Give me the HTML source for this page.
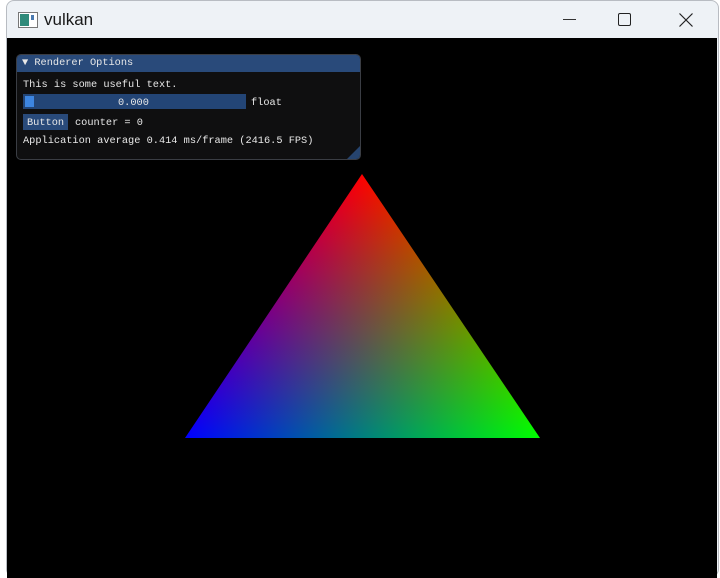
<!DOCTYPE html>
<html><head><meta charset="utf-8"><style>
html,body{margin:0;padding:0;width:720px;height:571px;overflow:hidden;background:#fff;font-family:"Liberation Sans",sans-serif}
.win{position:absolute;left:6px;top:0;width:711px;height:575px;border:1px solid #b8bcc2;border-radius:8px;background:#eef2f6;overflow:hidden}
.title{position:absolute;left:37px;top:9px;font-size:17px;color:#1a1a1a}
.content{position:absolute;left:0;top:38px;width:711px;height:540px;background:#000}
.mono{font-family:"Liberation Mono",monospace;font-size:10.3px;color:#e8e8e8;position:absolute;white-space:pre}
.panel{position:absolute;left:16px;top:54px;width:343px;height:104px;background:#0f0f10;border:1px solid #3a3d44;border-radius:5px;overflow:hidden}
.ph{position:absolute;left:0;top:0;width:100%;height:17px;background:#294a7a}
</style></head><body>
<div class="win">
 <svg style="position:absolute;left:11px;top:11px" width="20" height="16"><rect x="0.5" y="0.5" width="19" height="15" fill="#fff" stroke="#777"/><rect x="2" y="2" width="9" height="12" fill="#2f8a7a"/><rect x="13" y="3" width="3" height="5" fill="#4a7ab0"/></svg>
 <div class="title">vulkan</div>
 <div style="position:absolute;left:556px;top:18px;width:13px;height:1px;background:#333"></div>
 <div style="position:absolute;left:611px;top:12px;width:11px;height:11px;border:1.2px solid #222;border-radius:2px"></div>
 <svg style="position:absolute;left:672px;top:12px" width="14" height="14"><path d="M0.5 0.5L13.5 13.5M13.5 0.5L0.5 13.5" stroke="#222" stroke-width="1.2"/></svg>
</div>
<div class="content" style="left:7px;width:710px"></div>
<svg style="position:absolute;left:0;top:0" width="720" height="571">
<defs>
<linearGradient id="r" gradientUnits="userSpaceOnUse" x1="362" y1="438" x2="362" y2="174"><stop offset="0" stop-color="#000"/><stop offset="1" stop-color="#f00"/></linearGradient>
<linearGradient id="g" gradientUnits="userSpaceOnUse" x1="295.1" y1="273.8" x2="540" y2="438"><stop offset="0" stop-color="#000"/><stop offset="1" stop-color="#0f0"/></linearGradient>
<linearGradient id="b" gradientUnits="userSpaceOnUse" x1="429.1" y1="273.5" x2="185" y2="438"><stop offset="0" stop-color="#000"/><stop offset="1" stop-color="#00f"/></linearGradient>
</defs>
<polygon points="362,174 185,438 540,438" fill="url(#r)" style="mix-blend-mode:plus-lighter"/>
<polygon points="362,174 185,438 540,438" fill="url(#g)" style="mix-blend-mode:plus-lighter"/>
<polygon points="362,174 185,438 540,438" fill="url(#b)" style="mix-blend-mode:plus-lighter"/>
</svg>
<div class="panel">
 <div class="ph"></div>
 <svg style="position:absolute;left:330px;top:91px" width="13" height="13"><polygon points="13,0 13,13 0,13" fill="#26446e"/></svg>
</div>
<div class="mono" style="left:22px;top:57px">▼ Renderer Options</div>
<div class="mono" style="left:23px;top:79px">This is some useful text.</div>
<div style="position:absolute;left:23px;top:94px;width:223px;height:15px;background:#234576"></div>
<div style="position:absolute;left:25px;top:96px;width:9px;height:11px;background:#3d85e0"></div>
<div class="mono" style="left:118px;top:97px">0.000</div>
<div class="mono" style="left:251px;top:97px">float</div>
<div style="position:absolute;left:23px;top:114px;width:45px;height:16px;background:#294a7a"></div>
<div class="mono" style="left:27px;top:117px">Button</div>
<div class="mono" style="left:75px;top:117px">counter = 0</div>
<div class="mono" style="left:23px;top:135px">Application average 0.414 ms/frame (2416.5 FPS)</div>
</body></html>
